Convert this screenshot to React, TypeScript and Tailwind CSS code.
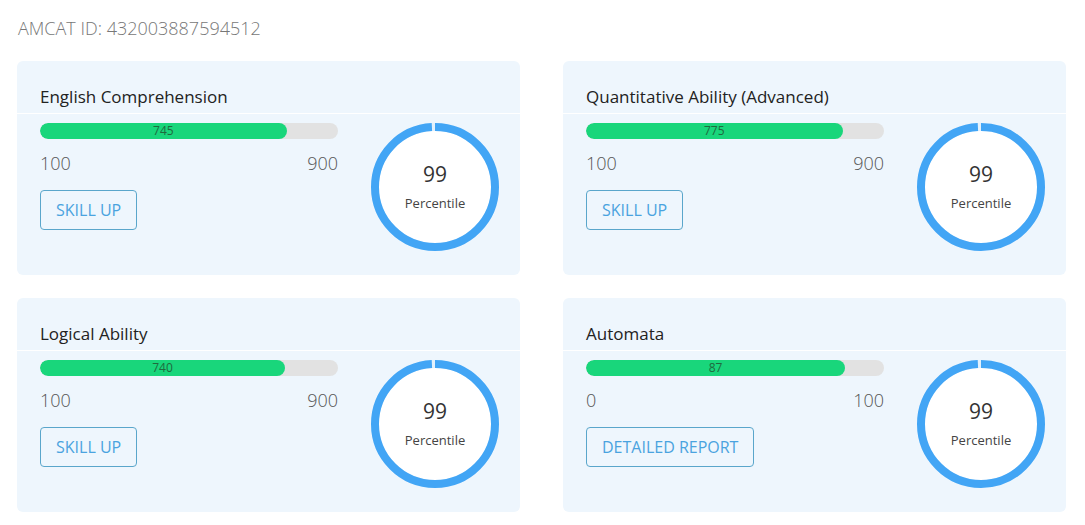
import React from 'react'

interface Score {
  title: string
  value: number
  min: number
  max: number
  percentile: number
  action: string
}

const scores: Score[] = [
  { title: 'English Comprehension', value: 745, min: 100, max: 900, percentile: 99, action: 'SKILL UP' },
  { title: 'Quantitative Ability (Advanced)', value: 775, min: 100, max: 900, percentile: 99, action: 'SKILL UP' },
  { title: 'Logical Ability', value: 740, min: 100, max: 900, percentile: 99, action: 'SKILL UP' },
  { title: 'Automata', value: 87, min: 0, max: 100, percentile: 99, action: 'DETAILED REPORT' },
]

function PercentileRing({ percentile }: { percentile: number }) {
  const r = 60
  const c = 2 * Math.PI * r
  return (
    <div className="relative w-[128px] h-[128px] shrink-0">
      <svg width="128" height="128" viewBox="0 0 128 128" className="-rotate-90">
        <circle cx="64" cy="64" r={r} fill="#ffffff" stroke="#e3f1fc" strokeWidth="8" />
        <circle
          cx="64"
          cy="64"
          r={r}
          fill="none"
          stroke="#42a5f5"
          strokeWidth="8"
          strokeDasharray={`${(c * percentile) / 100} ${c}`}
        />
      </svg>
      <div className="absolute inset-0 flex flex-col items-center justify-center">
        <span className="text-[21px] leading-6 text-[#333]">{percentile}</span>
        <span className="text-[13px] leading-5 text-[#444] mt-[7px]">Percentile</span>
      </div>
    </div>
  )
}

function ScoreCard({ score }: { score: Score }) {
  const pct = (score.value / score.max) * 100
  return (
    <div className="w-[503px] h-[214px] bg-[#eef6fd] rounded-md">
      {/* Header */}
      <div className="px-[23px] pt-6 pb-1 border-b border-white">
        <h3 className="text-[17px] leading-6 text-[#222]">{score.title}</h3>
      </div>

      {/* Body */}
      <div className="flex items-start pl-[23px] pt-[9px]">
        <div className="w-[298px]">
          <div className="h-4 rounded-full bg-[#e2e2e2] overflow-hidden">
            <div
              className="h-4 rounded-full bg-[#19d67b] flex items-center justify-center text-[12px] leading-4 text-[#1f6a3e]"
              style={{ width: `${pct}%` }}
            >
              {score.value}
            </div>
          </div>
          <div className="flex justify-between mt-3 text-[18px] leading-6 font-light text-[#555]">
            <span>{score.min}</span>
            <span>{score.max}</span>
          </div>
          <button className="mt-[15px] h-10 px-[15px] border border-[#5aa6cb] rounded text-[16px] text-[#4aa3df] bg-transparent">
            {score.action}
          </button>
        </div>
        <div className="ml-[33px]">
          <PercentileRing percentile={score.percentile} />
        </div>
      </div>
    </div>
  )
}

export default function App() {
  return (
    <div className="min-h-screen bg-white pl-[17px] pt-4 font-['Open_Sans',sans-serif]">
      <p className="text-[18px] leading-6 font-light text-[#777] ml-px">AMCAT ID: 432003887594512</p>
      <div className="grid grid-cols-[503px_503px] gap-x-[43px] gap-y-[23px] mt-[21px]">
        {scores.map((s) => (
          <ScoreCard key={s.title} score={s} />
        ))}
      </div>
    </div>
  )
}
